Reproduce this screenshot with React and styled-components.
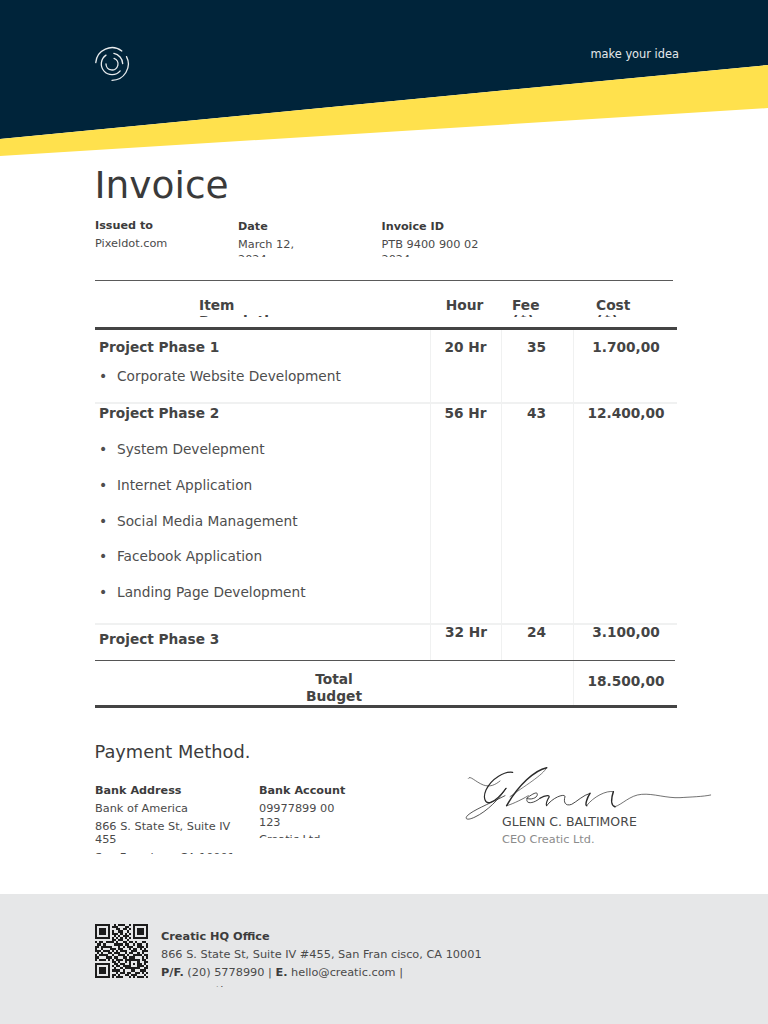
import React from "react";
import styled, { createGlobalStyle } from "styled-components";

const Global = createGlobalStyle`
  html, body { margin: 0; padding: 0; background: #fff; }
  body { font-family: "DejaVu Sans", "Liberation Sans", sans-serif; color: #3c3c3c; }
`;

const Page = styled.div`
  position: relative;
  width: 768px;
  height: 1024px;
  overflow: hidden;
  background: #fff;
  display: flex;
  flex-direction: column;
`;

const Banner = styled.header`
  position: relative;
  height: 156px;
  flex: none;
  svg.shape { display: block; width: 768px; height: 156px; }
`;

const LogoMark = styled.svg`
  position: absolute;
  left: 94px;
  top: 46px;
  width: 36px;
  height: 36px;
`;

const Tagline = styled.span`
  position: absolute;
  right: 89px;
  top: 47px;
  font-size: 11.4px;
  line-height: 14px;
  color: #e4e8ea;
`;

const Content = styled.main`
  padding: 7px 91px 0 95px;
  flex: 1;
`;

const Title = styled.h1`
  margin: 0 0 0 -0.5px;
  font-size: 37.5px;
  font-weight: 400;
  line-height: 44px;
  color: #3a3a3a;
`;

const MetaRow = styled.section`
  display: flex;
  margin-top: 11px;
  height: 62px;
  border-bottom: 1px solid #5a5a5a;
  width: 578px;
  box-sizing: content-box;
`;

const MetaCol = styled.div`
  width: ${(p) => p.$w}px;
  padding-top: ${(p) => p.$top}px;
`;

const Label = styled.div`
  font-size: 11.2px;
  font-weight: 700;
  line-height: 14px;
  color: #3c3c3c;
`;

const MetaValue = styled.div`
  margin-top: ${(p) => p.$gap}px;
  font-size: 11.3px;
  line-height: 15px;
  height: 20px;
  overflow: hidden;
  color: #4a4a4a;
  width: ${(p) => p.$w || 120}px;
`;

const Table = styled.section`
  width: 582px;
`;

const Cols = styled.div`
  display: grid;
  grid-template-columns: 335px 71px 72px 104px;
`;

const HeadRow = styled(Cols)`
  height: 46px;
  border-bottom: 3px solid #444;
`;

const HeadCell = styled.div`
  font-size: 13.8px;
  font-weight: 700;
  line-height: 16px;
  color: #444;
  text-align: ${(p) => p.$align || "center"};
  padding: 16px ${(p) => p.$pr || 0}px 0 ${(p) => p.$pl || 0}px;
  height: 37px;
  box-sizing: border-box;
  overflow: hidden;
`;

const HeadClip = styled.div`
  width: ${(p) => p.$w}px;
  height: 20px;
  overflow: hidden;
`;

const Row = styled(Cols)`
  height: ${(p) => p.$h}px;
  box-sizing: border-box;
  border-bottom: ${(p) => p.$line || "2px solid #f0f1f1"};
  width: ${(p) => p.$width || 582}px;
`;

const ItemCell = styled.div`
  padding: ${(p) => p.$top}px 0 0 4px;
`;

const NumCell = styled.div`
  border-left: 1px solid #f0f1f1;
  text-align: center;
  font-size: 13.7px;
  font-weight: 700;
  line-height: ${(p) => p.$lh || 18}px;
  color: #444;
  padding: ${(p) => p.$top}px ${(p) => p.$pr || 0}px 0 ${(p) => p.$pl || 0}px;
`;

const Phase = styled.div`
  font-size: 13.7px;
  font-weight: 700;
  line-height: 18px;
  color: #444;
`;

const Bullets = styled.ul`
  list-style: none;
  margin: ${(p) => p.$top}px 0 0;
  padding: 0;
  display: flex;
  flex-direction: column;
  gap: ${(p) => p.$gap || 0}px;
`;

const Bullet = styled.li`
  display: flex;
  font-size: 13.7px;
  line-height: 18px;
  color: #4e4e4e;
  &::before { content: "•"; width: 18px; flex: none; font-size: 14px; }
`;

const TotalLabel = styled.div`
  font-size: 13.8px;
  font-weight: 700;
  line-height: 17px;
  color: #444;
  text-align: center;
  width: 70px;
  margin: 10px 0 0 204px;
`;

const Spacer = styled.div``;

const Lower = styled.section`
  display: flex;
  margin-top: 33px;
  height: 113px;
`;

const PayCol = styled.div`
  width: 372px;
  flex: none;
`;

const PayTitle = styled.h2`
  margin: 0 0 0 -0.5px;
  font-size: 17.8px;
  line-height: 22px;
  font-weight: 400;
  color: #3c3c3c;
`;

const BankGrid = styled.div`
  display: grid;
  grid-template-columns: 164px 140px;
  margin-top: 21px;
`;

const BankLabel = styled.div`
  font-size: 11.2px;
  font-weight: 700;
  line-height: 14px;
  color: #3c3c3c;
`;

const BankClip = styled.div`
  margin-top: 4px;
  height: ${(p) => p.$h}px;
  overflow: hidden;
  font-size: 11.3px;
  line-height: 13.5px;
  color: #4a4a4a;
  width: ${(p) => p.$w}px;
  p { margin: 0 0 4px; }
`;

const SignCol = styled.div`
  position: relative;
  flex: 1;
`;

const Signature = styled.svg`
  position: absolute;
  left: -17px;
  top: 14px;
  width: 280px;
  height: 100px;
`;

const SignText = styled.div`
  position: relative;
  padding: 73px 0 0 35px;
`;

const SignName = styled.div`
  font-size: 12.5px;
  line-height: 16px;
  color: #484848;
`;

const SignRole = styled.div`
  margin-top: 2px;
  font-size: 11.3px;
  line-height: 15px;
  color: #8b8b8b;
`;

const Footer = styled.footer`
  height: 130px;
  flex: none;
  background: #e6e7e8;
  display: flex;
  align-items: flex-start;
  padding: 30px 0 0 95px;
  box-sizing: border-box;
`;

const QrBox = styled.svg`
  width: 53px;
  height: 54px;
  flex: none;
  shape-rendering: crispEdges;
`;

const FooterText = styled.div`
  margin: 4px 0 0 13px;
  width: 330px;
  height: 59px;
  overflow: hidden;
  font-size: 11.3px;
  line-height: 18px;
  color: #4a4a4a;
  b { color: #3c3c3c; }
`;

const qr = [
  "1111111001011100101111111",
  "1000001011100011001000001",
  "1011101000110110101011101",
  "1011101010011001001011101",
  "1011101011101010101011101",
  "1000001001010111001000001",
  "1111111010101010101111111",
  "0000000011011001000000000",
  "1011011110100110110100110",
  "0110100001111011001011001",
  "1101111100010101110011101",
  "1001000111011000101101010",
  "1110111010101110011100111",
  "0101001101110010110010100",
  "1011110010011101001111011",
  "1100011101100110111000101",
  "1011101010111011111110110",
  "0000000011010010100010011",
  "1111111001101100101011010",
  "1000001010110111100011101",
  "1011101001001011111110011",
  "1011101011110100011001110",
  "1011101000101101100110101",
  "1000001011010011011100010",
  "1111111010111000101011101",
];

function polar(r, deg) {
  const a = (deg * Math.PI) / 180;
  return [18 + r * Math.cos(a), 18 + r * Math.sin(a)];
}
function arc(r, from, to) {
  const [x1, y1] = polar(r, from);
  const [x2, y2] = polar(r, to);
  const large = to - from > 180 ? 1 : 0;
  return `M${x1.toFixed(2)} ${y1.toFixed(2)}A${r} ${r} 0 ${large} 1 ${x2.toFixed(2)} ${y2.toFixed(2)}`;
}

const Logo = () => (
  <LogoMark viewBox="0 0 36 36" fill="none" stroke="#e8ecee" strokeWidth="1.3" strokeLinecap="round">
    <path d={arc(16.3, 185, 307)} />
    <path d={arc(16.3, 333, 450)} />
    <path d={arc(10.7, 40, 236)} />
    <path d={arc(10.7, 280, 358)} />
    <path d={arc(6, 290, 540)} />
  </LogoMark>
);

const App = () => (
  <Page>
    <Global />
    <Banner>
      <svg className="shape" viewBox="0 0 768 156">
        <polygon points="0,0 768,0 768,65 0,139" fill="#00243a" />
        <polygon points="0,139 768,65 768,108 0,156" fill="#ffe14d" />
      </svg>
      <Logo />
      <Tagline>make your idea</Tagline>
    </Banner>
    <Content>
      <Title>Invoice</Title>
      <MetaRow>
        <MetaCol $w={143} $top={1}>
          <Label>Issued to</Label>
          <MetaValue $gap={3}>Pixeldot.com</MetaValue>
        </MetaCol>
        <MetaCol $w={143.5} $top={2}>
          <Label>Date</Label>
          <MetaValue $gap={3} $w={72}>March 12, 2024</MetaValue>
        </MetaCol>
        <MetaCol $w={200} $top={2}>
          <Label>Invoice ID</Label>
          <MetaValue $gap={3} $w={110}>PTB 9400 900 02 2024</MetaValue>
        </MetaCol>
      </MetaRow>
      <Table>
        <HeadRow>
          <HeadCell $align="left" $pl={104}>
            <HeadClip $w={80}>Item Description</HeadClip>
          </HeadCell>
          <HeadCell $pr={2}>Hour</HeadCell>
          <HeadCell $align="left" $pl={11}>
            <HeadClip $w={34}>Fee ($)</HeadClip>
          </HeadCell>
          <HeadCell $align="left" $pl={23}>
            <HeadClip $w={44}>Cost ($)</HeadClip>
          </HeadCell>
        </HeadRow>
        <Row $h={74}>
          <ItemCell $top={8}>
            <Phase>Project Phase 1</Phase>
            <Bullets $top={11}>
              <Bullet>Corporate Website Development</Bullet>
            </Bullets>
          </ItemCell>
          <NumCell $top={8} $pr={1}>20 Hr</NumCell>
          <NumCell $top={8} $pr={2}>35</NumCell>
          <NumCell $top={8} $pl={1}>1.700,00</NumCell>
        </Row>
        <Row $h={221}>
          <ItemCell $top={0}>
            <Phase>Project Phase 2</Phase>
            <Bullets $top={18} $gap={17.8}>
              <Bullet>System Develepment</Bullet>
              <Bullet>Internet Application</Bullet>
              <Bullet>Social Media Management</Bullet>
              <Bullet>Facebook Application</Bullet>
              <Bullet>Landing Page Development</Bullet>
            </Bullets>
          </ItemCell>
          <NumCell $top={0} $pr={1}>56 Hr</NumCell>
          <NumCell $top={0} $pr={2}>43</NumCell>
          <NumCell $top={0} $pl={1}>12.400,00</NumCell>
        </Row>
        <Row $h={36} $line="1px solid #555" $width={580}>
          <ItemCell $top={5}>
            <Phase>Project Phase 3</Phase>
          </ItemCell>
          <NumCell $top={0} $lh={14}>32 Hr</NumCell>
          <NumCell $top={0} $lh={14} $pr={2}>24</NumCell>
          <NumCell $top={0} $lh={14} $pl={1}>3.100,00</NumCell>
        </Row>
        <Row $h={47} $line="3px solid #444">
          <TotalLabel>Total Budget</TotalLabel>
          <Spacer />
          <Spacer />
          <NumCell $top={11} $pl={1}>18.500,00</NumCell>
        </Row>
      </Table>
      <Lower>
        <PayCol>
          <PayTitle>Payment Method.</PayTitle>
          <BankGrid>
            <div>
              <BankLabel>Bank Address</BankLabel>
              <BankClip $h={52} $w={140}>
                <p>Bank of America</p>
                <p>866 S. State St, Suite IV 455</p>
                <p>San Francisco, CA 10001</p>
              </BankClip>
            </div>
            <div>
              <BankLabel>Bank Account</BankLabel>
              <BankClip $h={36} $w={100}>
                <p>09977899 00 123</p>
                <p>Creatic Ltd.</p>
              </BankClip>
            </div>
          </BankGrid>
        </PayCol>
        <SignCol>
          <Signature viewBox="0 0 840 300" fill="none" stroke="#2a2a2a" strokeLinecap="round" strokeLinejoin="round">
            <path d="M55 70C60 60 75 80 100 90C120 97 135 90 150 78" strokeWidth="2" />
            <path d="M188 52C165 48 125 70 108 105C98 128 105 148 122 142C140 136 155 118 168 100" strokeWidth="3.6" />
            <path d="M168 100C150 130 110 170 75 186C55 196 42 194 52 182C70 165 110 150 165 122" strokeWidth="2.4" />
            <path d="M290 38C255 45 205 90 170 152" strokeWidth="4.5" />
            <path d="M290 38C280 60 220 95 180 125" strokeWidth="1.8" />
            <path d="M170 152C180 150 210 137 235 122" strokeWidth="2" />
            <path d="M230 130C245 118 262 108 262 118C262 130 240 135 232 130C225 145 245 150 270 130" strokeWidth="2.6" />
            <path d="M270 130C285 120 305 118 295 130C290 140 288 150 290 152" strokeWidth="3.6" />
            <path d="M290 152C310 125 345 115 345 125C340 140 345 155 365 148C380 140 400 120 420 115" strokeWidth="2.6" />
            <path d="M420 115C410 130 405 150 410 152" strokeWidth="4.5" />
            <path d="M410 152C430 125 470 105 490 110" strokeWidth="2" />
            <path d="M490 110C485 125 480 150 495 155" strokeWidth="4.5" />
            <path d="M495 155C515 150 540 120 575 118C610 115 650 130 690 128C720 126 760 125 782 120" strokeWidth="2" />
          </Signature>
          <SignText>
            <SignName>GLENN C. BALTIMORE</SignName>
            <SignRole>CEO Creatic Ltd.</SignRole>
          </SignText>
        </SignCol>
      </Lower>
    </Content>
    <Footer>
      <QrBox viewBox="0 0 25 25" preserveAspectRatio="none">
        {qr.flatMap((row, y) =>
          row.split("").map((c, x) =>
            c === "1" ? <rect key={`${x}-${y}`} x={x} y={y} width="1" height="1" fill="#1c1c1c" /> : null
          )
        )}
      </QrBox>
      <FooterText>
        <b>Creatic HQ Office</b>
        <br />
        866 S. State St, Suite IV #455, San Fran cisco, CA 10001
        <br />
        <b>P/F.</b> (20) 5778990 | <b>E.</b> hello@creatic.com | www.creatic.com
      </FooterText>
    </Footer>
  </Page>
);

export default App;
